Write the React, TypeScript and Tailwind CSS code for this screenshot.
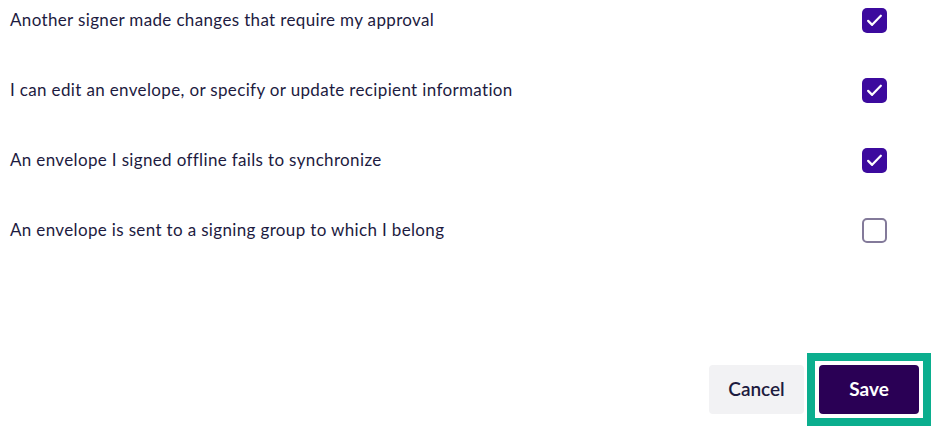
import React from 'react';

const rows = [
  { label: 'Another signer made changes that require my approval', checked: true },
  { label: 'I can edit an envelope, or specify or update recipient information', checked: true },
  { label: 'An envelope I signed offline fails to synchronize', checked: true },
  { label: 'An envelope is sent to a signing group to which I belong', checked: false },
];

function Checkbox({ checked }: { checked: boolean }) {
  if (checked) {
    return (
      <div className="w-[25px] h-[25px] rounded-[5px] bg-[#3c0a9e] flex items-center justify-center">
        <svg width="19" height="19" viewBox="0 0 24 24" fill="none">
          <path d="M4 12.5l5 5L20 6" stroke="#fff" strokeWidth="2.8" strokeLinecap="round" strokeLinejoin="round" />
        </svg>
      </div>
    );
  }
  return <div className="w-[25px] h-[25px] rounded-[5px] border-2 border-[#837a9a] bg-white" />;
}

export default function App() {
  return (
    <div className="w-[943px] h-[437px] bg-white flex flex-col text-[#1d1b3f]" style={{ fontFamily: 'Lato, "Noto Sans", sans-serif' }}>
      <div className="flex flex-col gap-[30px] pl-[10px] pr-[56px]">
        {rows.map((r) => (
          <div key={r.label} className="h-[40px] flex items-center justify-between">
            <span className="text-[17px] tracking-[0.35px]">{r.label}</span>
            <Checkbox checked={r.checked} />
          </div>
        ))}
      </div>

      <div className="mt-auto mb-[11px] flex justify-end items-center gap-[3px] pr-[12px]">
        <button className="w-[95px] h-[49px] rounded-[4px] bg-[#f2f2f4] text-[19px] font-semibold text-[#1d1b3f]">
          Cancel
        </button>
        <div className="border-[8px] border-[#0bae8e] p-[4px]">
          <button className="w-[100px] h-[49px] rounded-[4px] bg-[#2a0055] text-white text-[19px] font-bold block">
            Save
          </button>
        </div>
      </div>
    </div>
  );
}
